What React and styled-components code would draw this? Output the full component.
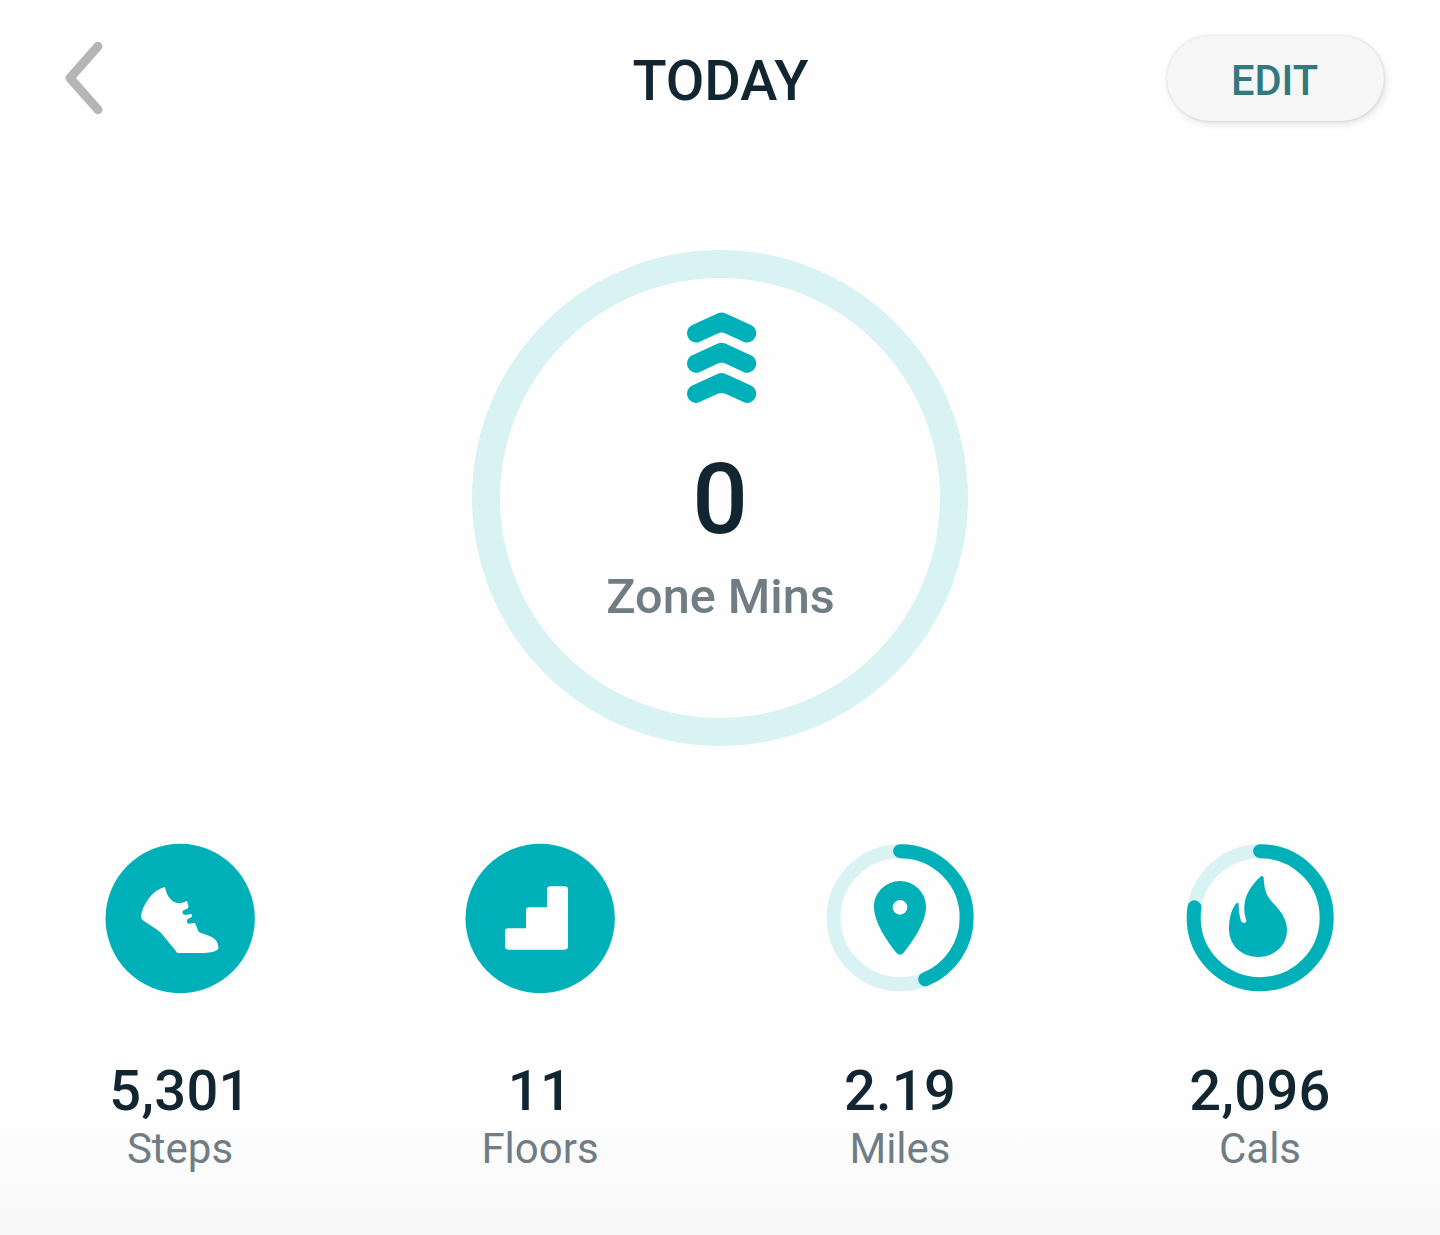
import React from 'react';
import styled, { createGlobalStyle } from 'styled-components';

const TEAL = '#00b0b9';
const PALE_TEAL = '#d9f2f4';

const GlobalStyle = createGlobalStyle`
  * {
    box-sizing: border-box;
  }

  body {
    margin: 0;
    background: #fefefe;
    font-family: Roboto, sans-serif;
  }
`;

// Styled Components
const Page = styled.div`
  width: 1440px;
  height: 1235px;
  overflow: hidden;
  display: flex;
  flex-direction: column;
  background: linear-gradient(#fefefe 1120px, #fbfbfb 1165px, #f9f9f9 1210px);
`;

const Header = styled.header`
  height: 157px;
  padding: 0 56px 0 57px;
  display: grid;
  grid-template-columns: 1fr auto 1fr;
  align-items: center;
`;

const BackButton = styled.button`
  width: 60px;
  height: 84px;
  padding: 0;
  border: none;
  background: none;
  cursor: pointer;

  svg {
    display: block;
  }
`;

const Title = styled.h1`
  margin: 0;
  padding-top: 5px;
  font-size: 56px;
  line-height: 64px;
  font-weight: 500;
  color: #112630;
`;

const EditButton = styled.button`
  justify-self: end;
  width: 217px;
  height: 85px;
  padding: 4px 2px 0 0;
  border: none;
  border-radius: 43px;
  background: #f6f6f6;
  box-shadow: 0 0 3px rgba(0, 0, 0, 0.15), 2px 3px 7px rgba(0, 0, 0, 0.1);
  font-family: inherit;
  font-size: 41.6px;
  line-height: 50px;
  font-weight: 500;
  color: #32797f;
  cursor: pointer;
`;

const GoalRing = styled.section`
  width: 496px;
  height: 496px;
  margin: 93px auto 0;
  padding-top: 34px;
  border: 28px solid ${PALE_TEAL};
  border-radius: 50%;
  display: flex;
  flex-direction: column;
  align-items: center;
`;

const GoalValue = styled.div`
  margin-top: 38px;
  font-size: 98px;
  line-height: 112px;
  font-weight: 500;
  color: #112630;
`;

const GoalLabel = styled.div`
  margin-top: 12px;
  padding-left: 1px;
  font-size: 48.6px;
  line-height: 58px;
  font-weight: 500;
  color: #717d84;
`;

const Stats = styled.section`
  margin-top: 97px;
  display: grid;
  grid-template-columns: repeat(4, 1fr);
`;

const Stat = styled.div`
  display: flex;
  flex-direction: column;
  align-items: center;
`;

const StatValue = styled.div`
  margin-top: 66px;
  font-size: 56px;
  line-height: 64px;
  font-weight: 500;
  letter-spacing: 0.3px;
  color: #112630;
`;

const StatLabel = styled.div`
  font-size: 42px;
  line-height: 52px;
  color: #717d84;
`;

const BackIcon = () => (
  <svg width="60" height="84" viewBox="0 0 60 84" fill="none">
    <path
      d="M41 9.3 L13 41 L41 72.7"
      stroke="#b5b5b5"
      strokeWidth="9"
      strokeLinecap="round"
      strokeLinejoin="round"
    />
  </svg>
);

const ZoneIcon = () => (
  <svg width="74" height="94" viewBox="0 0 74 94" fill={TEAL}>
    {[0, 30.2, 60.4].map((y) => (
      <path
        key={y}
        transform={`translate(0 ${y})`}
        d="M35 1.3 Q38.6 -0.3 42.2 1.3 L69 13.6 A9.2 9.2 0 0 1 61.6 30.2 L42.4 21.4 Q38.6 19.8 34.8 21.4 L15.6 30.2 A9.2 9.2 0 0 1 8.2 13.6 Z"
      />
    ))}
  </svg>
);

const ShoeIcon = () => (
  <path
    fill="#fff"
    d="M209 156 C211 159 212 163 213 168 C217 185 232 202 247 204 C258 205 268 202 276 197 C278 204 279 209 281 216 C279 221 274 224 267 225 C261 227 261 237 267 239 C274 241 281 237 287 237 C293 238 292 244 288 247 C284 251 278 250 276 256 C274 263 279 267 285 266 C291 265 296 262 300 265 C304 271 307 282 311 290 C325 298 346 300 359 312 C367 319 371 332 370 341 C367 345 360 349 350 351 C340 353 330 354 318 354 L249 354 C246 354 245 352 243 349 L210 308 C204 300 198 293 190 287 C176 276 158 266 142 254 C138 250 138 244 139 238 C143 216 158 190 177 173 C187 164 198 160 209 156 Z"
  />
);

const StairsIcon = () => (
  <path
    fill="#fff"
    d="M286 154 H329 Q339 154 339 164 V334 Q339 344 329 344 H160 Q150 344 150 334 V290 Q150 280 160 280 H213 V227 Q213 217 223 217 H276 V164 Q276 154 286 154 Z"
  />
);

const PinIcon = () => (
  <path
    fill={TEAL}
    fillRule="evenodd"
    d="M255 138 C298 138 333 173 333 215 C333 262 293 319 265 354 Q255 365 245 354 C217 319 177 262 177 215 C177 173 212 138 255 138 Z M255 195 A22 22 0 1 0 255 239 A22 22 0 1 0 255 195 Z"
  />
);

const FlameIcon = () => (
  <path
    fill={TEAL}
    d="M258 124 Q265 120 266 128 C267 151 270 171 282 189 C294 207 310 217 323 240 C332 256 336 271 336 285 C336 332 298 366 250 366 C202 366 162 333 162 282 C162 252 169 223 184 205 Q191 201 191 208 C191 226 193 243 198 257 C202 266 214 266 214 257 C209 240 207 228 208 215 C208 180 234 144 258 124 Z"
  />
);

const RADIUS = 199.5;

const Badge = ({ progress, children }) => {
  const complete = progress >= 100;

  return (
    <svg width="150" height="150" viewBox="30 24 450 450" fill="none">
      {complete ? (
        <circle cx="255.5" cy="250.5" r="224" fill={TEAL} />
      ) : (
        <g strokeWidth="42">
          <circle cx="255.5" cy="248" r={RADIUS} stroke={PALE_TEAL} />
          <circle
            cx="255.5"
            cy="248"
            r={RADIUS}
            stroke={TEAL}
            strokeLinecap="round"
            pathLength="100"
            strokeDasharray={`${progress} 100`}
            transform="rotate(-90 255.5 248)"
          />
        </g>
      )}
      {children}
    </svg>
  );
};

const stats = [
  { label: 'Steps', value: '5,301', progress: 100, Icon: ShoeIcon },
  { label: 'Floors', value: '11', progress: 100, Icon: StairsIcon },
  { label: 'Miles', value: '2.19', progress: 43.8, Icon: PinIcon },
  { label: 'Cals', value: '2,096', progress: 77.4, Icon: FlameIcon },
];

const App = () => (
  <>
    <GlobalStyle />
    <Page>
      <Header>
        <BackButton aria-label="Back">
          <BackIcon />
        </BackButton>
        <Title>TODAY</Title>
        <EditButton>EDIT</EditButton>
      </Header>

      <GoalRing>
        <ZoneIcon />
        <GoalValue>0</GoalValue>
        <GoalLabel>Zone Mins</GoalLabel>
      </GoalRing>

      <Stats>
        {stats.map(({ label, value, progress, Icon }) => (
          <Stat key={label}>
            <Badge progress={progress}>
              <Icon />
            </Badge>
            <StatValue>{value}</StatValue>
            <StatLabel>{label}</StatLabel>
          </Stat>
        ))}
      </Stats>
    </Page>
  </>
);

export default App;
